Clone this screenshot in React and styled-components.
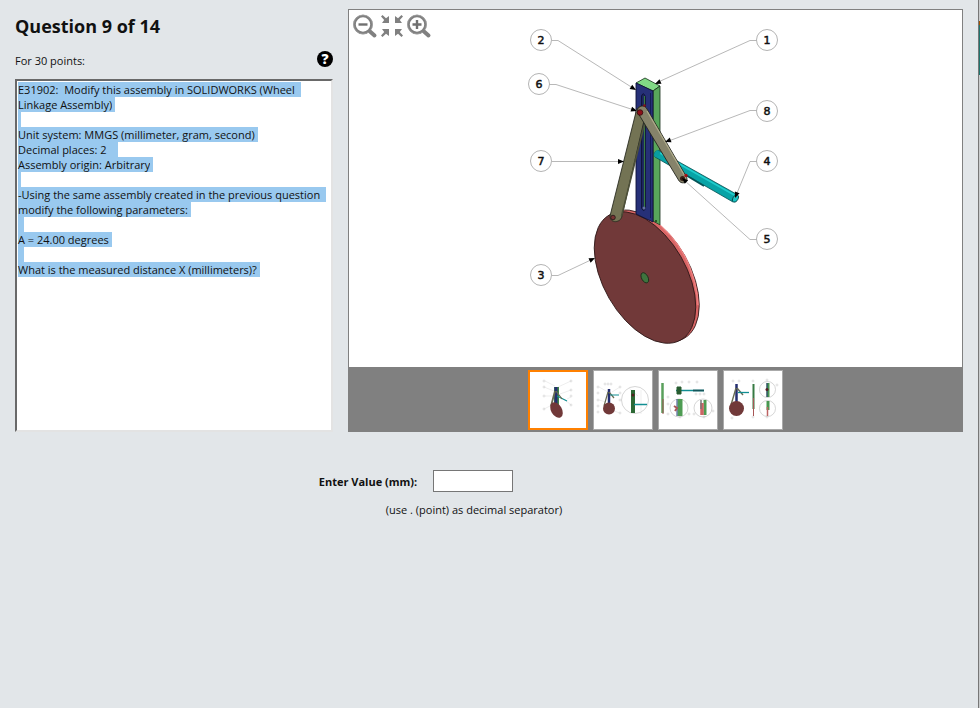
import React, { useEffect, useRef, useState } from "react";
import styled, { createGlobalStyle } from "styled-components";

const GlobalStyle = createGlobalStyle`
  *, *::before, *::after { box-sizing: border-box; }
  body {
    margin: 0;
    background: #e2e6e9;
    color: #111;
    font: 11px/15px "Open Sans", "Noto Sans", sans-serif;
  }
`;

const Shell = styled.div`
  display: grid;
  grid-template-columns: minmax(0, 1fr) 2px;
  min-height: 100vh;
`;

const Page = styled.main`
  padding: 9px 15px 24px;
`;

const Columns = styled.div`
  display: grid;
  grid-template-columns: minmax(0, 318fr) minmax(0, 615fr);
  gap: 15px;
`;

const QuestionColumn = styled.section`
  display: flex;
  flex-direction: column;
`;

const Title = styled.h1`
  margin: 5px 0 0;
  font-size: 18px;
  line-height: 24px;
  font-weight: 700;
`;

const PointsRow = styled.div`
  display: flex;
  align-items: center;
  justify-content: space-between;
  height: 20px;
  margin: 11px 0 10px;
`;

const PointsLabel = styled.label`
  padding-top: 2px;
`;

const HelpButton = styled.button`
  width: 16px;
  height: 16px;
  padding: 0;
  border: 0;
  border-radius: 50%;
  background: #000;
  color: #fff;
  font: 800 14px/16px "Open Sans", sans-serif;
  text-align: center;
`;

const QuestionText = styled.textarea`
  flex: 1;
  width: 100%;
  min-height: 352px;
  padding: 1px 0 0 1px;
  border: 2px solid;
  border-color: #696969 #e3e3e3 #e3e3e3 #696969;
  border-radius: 0;
  outline: 0;
  resize: none;
  overflow: hidden;
  background: #fff;
  color: #111;
  font: inherit;

  &::selection {
    background: #99c9ef;
    color: #111;
  }
`;

const Viewer = styled.section`
  display: flex;
  flex-direction: column;
  border: 1px solid #808080;
  background: #fff;
`;

const Stage = styled.div`
  position: relative;
`;

const Drawing = styled.svg`
  display: block;
  width: 100%;
  height: 357px;
`;

const ZoomBar = styled.div`
  position: absolute;
  top: 3px;
  left: 3px;
  display: flex;
`;

const ZoomButton = styled.button`
  width: 27px;
  height: 27px;
  padding: 0;
  border: 0;
  background: none;

  svg { display: block; }
`;

const ThumbStrip = styled.div`
  display: flex;
  justify-content: center;
  gap: 5px;
  padding: 3px 0 1px;
  background: #808080;
`;

const Thumb = styled.button`
  width: 60px;
  height: 60px;
  padding: 0;
  border: ${(p) => (p.$active ? "2px solid #ff8000" : "1px solid #aaa")};
  background: #fff;

  svg { display: block; width: 100%; height: 100%; }
`;

const AnswerForm = styled.form`
  margin-top: 38px;
`;

const AnswerRow = styled.div`
  display: flex;
  align-items: center;
  justify-content: center;
  gap: 16px;
  padding-right: 146px;
`;

const AnswerLabel = styled.label`
  font-weight: 700;
`;

const AnswerInput = styled.input`
  width: 80px;
  height: 22px;
  padding: 1px 4px;
  border: 1px solid #767676;
  border-radius: 0;
  background: #fff;
  font: inherit;
`;

const Hint = styled.p`
  margin: 10px 0 0;
  padding-right: 30px;
  text-align: center;
`;

const Edge = styled.aside`
  display: flex;
  flex-direction: column;
  border-left: 1px solid #777;
  background: #c9cbcc;
`;

const EdgeBand = styled.div`
  height: ${(p) => p.$height}px;
  background: ${(p) => p.$color};
`;

const question = `E31902:  Modify this assembly in SOLIDWORKS (Wheel Linkage Assembly)

Unit system: MMGS (millimeter, gram, second)
Decimal places: 2   
Assembly origin: Arbitrary

-Using the same assembly created in the previous question modify the following parameters:
 
A = 24.00 degrees
 
What is the measured distance X (millimeters)?
`;

const balloons = [
  { n: 2, x: 541, y: 40, path: "M552 40.5H558L636 90", tip: [636, 90], angle: 32 },
  { n: 1, x: 767, y: 40, path: "M757 40.5H750L656 83", tip: [655, 84], angle: 156 },
  { n: 6, x: 539, y: 84, path: "M549 84.5H556L637 111", tip: [637, 111], angle: 18 },
  { n: 8, x: 767, y: 111, path: "M757 110.5H750L666 142", tip: [665, 142], angle: 160 },
  { n: 7, x: 541, y: 161, path: "M552 161.5H623", tip: [624, 161.5], angle: 0 },
  { n: 4, x: 767, y: 161, path: "M757 161.5H750L735 198", tip: [735, 198], angle: 112 },
  { n: 3, x: 541, y: 275, path: "M552 275.5H558L595 258", tip: [595, 258], angle: -25 },
  { n: 5, x: 767, y: 239, path: "M757 239.5H750L684 180", tip: [682, 178], angle: 222 },
];

function Assembly() {
  return (
    <g strokeLinejoin="round">
      <ellipse cx="648.5" cy="275.8" rx="72" ry="41.5" transform="rotate(60.2 648.5 275.8)" fill="#d96565" stroke="#331b1b" strokeWidth=".8" />
      <path d="M652 219Q676 236 688 263Q697 284 698 305" fill="none" stroke="#ee7f7f" strokeWidth="1.5" />
      <path d="M636 83L645 78L660 86L653 91Z" fill="#81d985" stroke="#142d18" strokeWidth=".8" />
      <path d="M653 91L660 86V225L653 221Z" fill="#58a65b" stroke="#142d18" strokeWidth=".8" />
      <ellipse cx="645" cy="277.5" rx="72" ry="41.5" transform="rotate(60.2 645 277.5)" fill="#713939" stroke="#2b1515" strokeWidth=".8" />
      <ellipse cx="644.8" cy="277.8" rx="5.5" ry="3.2" transform="rotate(62 644.8 277.8)" fill="#3e743e" stroke="#182a18" strokeWidth=".8" />
      <path d="M636 83L653 91V222L636 214Z" fill="#263078" stroke="#0d1136" strokeWidth=".9" />
      <path d="M641.5 96Q643.5 91 645.5 97V208Q644 213 641.5 208Z" fill="#1c245f" stroke="#0a0e2d" strokeWidth=".8" />
      <path d="M644.5 96V207" stroke="#387b43" strokeWidth="1.2" />
      <path d="M650.5 93V218" stroke="#10174c" strokeWidth=".8" />
      <circle cx="644" cy="208" r="1.5" fill="#6170a3" />
      <circle cx="656" cy="221" r="1" fill="#173c19" />
      <path d="M658.5 150.5L738 195L733 202L655 157Q652 152 658.5 150.5Z" fill="#08a3a6" stroke="#064f50" strokeWidth=".8" />
      <path d="M660 153L736 196" stroke="#20cccc" strokeWidth="1.6" />
      <path d="M684 174l20 12" stroke="#035457" strokeWidth="1.6" />
      <ellipse cx="657" cy="153.8" rx="2.5" ry="3.6" transform="rotate(30 657 153.8)" fill="#0a9da0" />
      <ellipse cx="735.5" cy="198.5" rx="2.5" ry="4" transform="rotate(30 735.5 198.5)" fill="#18c4c4" stroke="#063f40" strokeWidth=".8" />
      <path d="M636 112C637 105 646 104 646 112L622 216C621 223 610 224 610 216Z" fill="#737354" stroke="#292b20" strokeWidth=".9" />
      <path d="M644.5 124L621.5 216" stroke="#4e5039" strokeWidth="1.5" />
      <circle cx="613" cy="217.5" r="2.3" fill="#773232" stroke="#211414" strokeWidth=".8" />
      <path d="M638 113C635 107 644 103 647 109L686.5 177C689 183 681 185 678.5 180Z" fill="#86836a" stroke="#25261e" strokeWidth=".9" />
      <path d="M647 111L686 178" stroke="#b0ad8c" strokeWidth="1.2" />
      <circle cx="640" cy="112.5" r="2.8" fill="#8b1018" stroke="#330b0e" strokeWidth=".8" />
      <circle cx="644.5" cy="105.5" r="1.2" fill="#8b1018" />
      <circle cx="686" cy="175.5" r="1.7" fill="#a21218" />
      <circle cx="682.5" cy="178.5" r="2.5" fill="#382017" />
    </g>
  );
}

function AssemblyDrawing() {
  return (
    <Drawing viewBox="349 10 613 357" role="img" aria-label="Wheel linkage assembly with numbered parts">
      <Assembly />
      {balloons.map((b) => (
        <g key={b.n}>
          <path d={b.path} fill="none" stroke="#a6a6a6" strokeWidth=".8" />
          <path
            d="M0 0L-6 -2.5V2.5Z"
            transform={`translate(${b.tip[0]} ${b.tip[1]}) rotate(${b.angle})`}
            fill="#000"
          />
          <circle cx={b.x} cy={b.y} r="10.5" fill="#fff" stroke="#aaa" strokeWidth=".9" />
          <text
            x={b.x}
            y={b.y + 4}
            textAnchor="middle"
            fontFamily="DejaVu Sans, sans-serif"
            fontSize="11"
            fill="#111"
            stroke="#111"
            strokeWidth=".5"
          >
            {b.n}
          </text>
        </g>
      ))}
    </Drawing>
  );
}

function Lens({ plus }) {
  return (
    <svg width="27" height="27" viewBox="0 0 27 27" fill="none" stroke="#808080">
      <circle cx="11" cy="11.5" r="8.5" strokeWidth="2.6" />
      <circle cx="11" cy="11.5" r="9.5" stroke="#a0a0a0" strokeWidth=".8" />
      <path d="M18 18.5L22.5 22.5" strokeWidth="4" strokeLinecap="round" />
      <path d={plus ? "M6.5 11.5H15.5M11 7V16" : "M6.5 11.5H15.5"} stroke="#707070" strokeWidth="2.4" />
    </svg>
  );
}

function FitIcon() {
  const arrow = "M0 1.5L1.5 0L5 3.2L8 1V8H1L3.2 5Z";
  return (
    <svg width="27" height="27" viewBox="0 0 27 27" fill="#808080">
      <path d={arrow} transform="translate(2 2)" />
      <path d={arrow} transform="translate(24 2) scale(-1 1)" />
      <path d={arrow} transform="translate(2 24) scale(1 -1)" />
      <path d={arrow} transform="translate(24 24) scale(-1 -1)" />
    </svg>
  );
}

const Dots = ({ points }) =>
  points.map(([x, y]) => <circle key={`${x}-${y}`} cx={x} cy={y} r="1" fill="none" stroke="#c4c4c4" strokeWidth=".5" />);

function ThumbIso() {
  return (
    <svg viewBox="2 2 56 56" fill="none">
      <path d="M17 11L27 16M43 11L30 17M16 17L26 21M43 20L32 24M17 26H25M43 27L39 29M16 39L22 36M43 35L36 29" stroke="#ddd" strokeWidth=".5" />
      <Dots points={[[16, 11], [43, 11], [16, 17], [43, 20], [16, 26], [43, 26], [16, 39], [43, 35]]} />
      <path d="M27 17V35M30 17V35" stroke="#3f8648" strokeWidth="2" />
      <path d="M28 17V35" stroke="#242e70" strokeWidth="3" />
      <path d="M27 21L23 36" stroke="#686b52" strokeWidth="1.8" />
      <path d="M29 26L39 31" stroke="#118e92" strokeWidth="1.2" />
      <path d="M28 21L34 29" stroke="#686b52" strokeWidth="1.2" />
      <ellipse cx="28.5" cy="40" rx="8.5" ry="5.4" transform="rotate(60 28.5 40)" fill="#713939" />
    </svg>
  );
}

function ThumbFront() {
  return (
    <svg viewBox="1 1 58 58" fill="none">
      <Dots points={[[12, 14], [15, 14], [18, 14], [5, 17], [5, 23], [5, 30], [5, 36], [5, 42], [27, 17], [27, 23], [27, 30], [27, 43]]} />
      <path d="M6 17L15 22M6 30L13 32M27 17L19 22M27 43L21 41" stroke="#ddd" strokeWidth=".5" />
      <path d="M16 19V36" stroke="#242e70" strokeWidth="2.5" />
      <path d="M15 22L11 36M16 22L21 28" stroke="#686b52" strokeWidth="1.2" />
      <path d="M17 25H26" stroke="#118e92" />
      <circle cx="16" cy="38.5" r="6" fill="#713939" />
      <circle cx="42" cy="30" r="13.5" stroke="#bbb" strokeWidth=".6" />
      <path d="M36 18L45 26M48 20V44" stroke="#ddd" strokeWidth=".5" />
      <path d="M40 20V43" stroke="#2d6935" strokeWidth="4" />
      <path d="M41 34.5H54" stroke="#118e92" strokeWidth="1.5" />
      <circle cx="40" cy="25" r="1.5" fill="#542020" />
    </svg>
  );
}

function ThumbSections() {
  return (
    <svg viewBox="1 1 58 58" fill="none">
      <Dots points={[[18, 13], [24, 12], [31, 12], [39, 12], [38, 24], [42, 24], [46, 24], [10, 27], [10, 34], [10, 44], [31, 44], [36, 44], [55, 41], [22, 47], [46, 47]]} />
      <path d="M4.5 13V43" stroke="#5aa05c" strokeWidth="2.5" />
      <path d="M5 29V44" stroke="#9f5454" />
      <path d="M18 20.5H46" stroke="#118e92" strokeWidth="1.5" />
      <path d="M35 20.5H46" stroke="#15555a" strokeWidth="1.8" />
      <path d="M19 17H23V24H19Z" fill="#285d30" stroke="#285d30" />
      <circle cx="21" cy="38" r="9" stroke="#bbb" strokeWidth=".6" />
      <circle cx="45" cy="38" r="9" stroke="#bbb" strokeWidth=".6" />
      <path d="M22 29V46" stroke="#4e9c53" strokeWidth="5" />
      <path d="M19 29V46" stroke="#314783" />
      <path d="M16 36L19 38L17 41" stroke="#a85858" strokeWidth="2" />
      <path d="M47 30V45" stroke="#4e9c53" strokeWidth="3" />
      <path d="M44 33V45" stroke="#cd6565" strokeWidth="3.5" />
      <path d="M43 30V39" stroke="#777" strokeWidth="1.5" />
    </svg>
  );
}

function ThumbDetails() {
  return (
    <svg viewBox="1 1 58 58" fill="none">
      <Dots points={[[10, 11], [16, 11], [30, 11], [44, 10], [54, 15], [30, 47], [9, 48], [44, 47]]} />
      <path d="M13.5 14V33" stroke="#242e70" strokeWidth="2.5" />
      <path d="M13 18L8 35M14 18L20 25" stroke="#686b52" strokeWidth="1.4" />
      <path d="M15 22.5H26" stroke="#118e92" strokeWidth="1.3" />
      <circle cx="13.5" cy="38.5" r="7.5" fill="#713939" />
      <path d="M30.5 14V39" stroke="#377a43" strokeWidth="2" />
      <path d="M30.5 28V46" stroke="#a75555" strokeWidth="1" />
      <circle cx="44.5" cy="19.5" r="8" stroke="#bbb" strokeWidth=".6" />
      <circle cx="44.5" cy="38.5" r="8" stroke="#bbb" strokeWidth=".6" />
      <path d="M45 13V27M45 31V40" stroke="#479750" strokeWidth="3" />
      <path d="M44 13V27" stroke="#283572" />
      <path d="M44.5 37V46" stroke="#bd6262" strokeWidth="1.5" />
      <circle cx="44" cy="19.5" r="1.5" fill="#571f24" />
    </svg>
  );
}

const thumbs = [
  { label: "Isometric view", View: ThumbIso },
  { label: "Front view", View: ThumbFront },
  { label: "Section views", View: ThumbSections },
  { label: "Detail views", View: ThumbDetails },
];

export default function App() {
  const textRef = useRef(null);
  const [active, setActive] = useState(0);
  const [value, setValue] = useState("");

  useEffect(() => {
    textRef.current.focus({ preventScroll: true });
    textRef.current.select();
  }, []);

  return (
    <>
      <GlobalStyle />
      <Shell>
        <Page>
          <Columns>
            <QuestionColumn>
              <Title>Question 9 of 14</Title>
              <PointsRow>
                <PointsLabel htmlFor="question">For 30 points:</PointsLabel>
                <HelpButton type="button" aria-label="Help">?</HelpButton>
              </PointsRow>
              <QuestionText id="question" ref={textRef} readOnly spellCheck={false} value={question} />
            </QuestionColumn>
            <Viewer aria-label="Drawing viewer">
              <Stage>
                <AssemblyDrawing />
                <ZoomBar>
                  <ZoomButton type="button" aria-label="Zoom out"><Lens /></ZoomButton>
                  <ZoomButton type="button" aria-label="Fit to view"><FitIcon /></ZoomButton>
                  <ZoomButton type="button" aria-label="Zoom in"><Lens plus /></ZoomButton>
                </ZoomBar>
              </Stage>
              <ThumbStrip>
                {thumbs.map(({ label, View }, i) => (
                  <Thumb key={label} type="button" aria-label={label} $active={i === active} onClick={() => setActive(i)}>
                    <View />
                  </Thumb>
                ))}
              </ThumbStrip>
            </Viewer>
          </Columns>
          <AnswerForm onSubmit={(e) => e.preventDefault()}>
            <AnswerRow>
              <AnswerLabel htmlFor="answer">Enter Value (mm):</AnswerLabel>
              <AnswerInput id="answer" inputMode="decimal" value={value} onChange={(e) => setValue(e.target.value)} />
            </AnswerRow>
            <Hint>(use . (point) as decimal separator)</Hint>
          </AnswerForm>
        </Page>
        <Edge>
          <EdgeBand $height={21} $color="#c9cbcc" />
          <EdgeBand $height={4} $color="#a35200" />
          <EdgeBand $height={50} $color="#20746e" />
        </Edge>
      </Shell>
    </>
  );
}
